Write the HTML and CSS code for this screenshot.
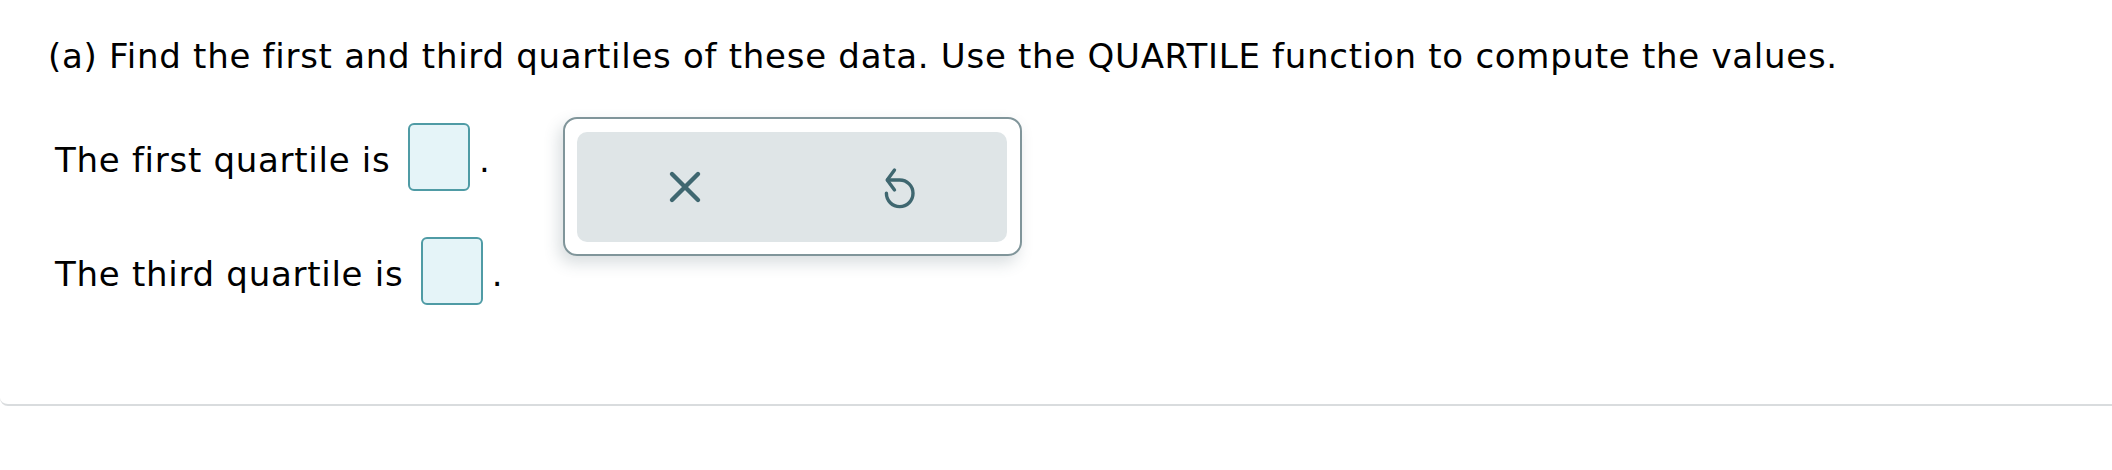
FILE: index.html
```html
<!DOCTYPE html>
<html>

<head>
    <meta charset="utf-8" />
    <title>Quartiles</title>
    <meta name="viewport" content="width=device-width, initial-scale=1">
    <link rel="stylesheet" href="styles.css">
</head>

<body>
    <div class="question">
        <p class="prompt">(a) Find the first and third quartiles of these data. Use the QUARTILE function to compute the values.</p>
        <div class="answers">
            <div class="answer-row">
                The first quartile is <span class="ans-box"></span>.
            </div>
            <div class="answer-row">
                The third quartile is <span class="ans-box"></span>.
            </div>

            <!-- keypad popup for the focused answer -->
            <div class="keypad">
                <div class="keypad-inner">
                    <button class="key" title="Clear">
                        <svg width="34" height="34" viewBox="0 0 34 34">
                            <path d="M4 4 L30 30 M30 4 L4 30" />
                        </svg>
                    </button>
                    <button class="key" title="Undo">
                        <svg width="40" height="44" viewBox="0 0 40 44">
                            <path d="M14.5 5 L7.2 15 L14.5 25" />
                            <path d="M7.6 15 H19.7 A13.3 13.3 0 1 1 6.4 28.3" />
                        </svg>
                    </button>
                </div>
            </div>
        </div>
    </div>
</body>

</html>
```

FILE: styles.css
```css
/* base */

body {
    margin: 0;
    font-family: "DejaVu Sans", Verdana, sans-serif;
    font-size: 34px;
    letter-spacing: 0.72px;
    color: #000;
    background: #fff;
}

/* layout */

.question {
    height: 406px;
    box-sizing: border-box;
    border-bottom: 2px solid #d9dcde;
    border-bottom-left-radius: 8px;
}

.prompt {
    margin: 0;
    padding: 36px 0 0 48px;
    line-height: 40px;
}

.answers {
    position: relative;
    margin-top: 47px;
}

.answer-row {
    padding-left: 55px;
    line-height: 40px;
    margin-bottom: 46px;
}

/* answer inputs */

.ans-box {
    display: inline-block;
    width: 62px;
    height: 68px;
    box-sizing: border-box;
    margin: 0 9px 0 6px;
    vertical-align: -19px;
    border: 2.5px solid #4f9ba5;
    border-radius: 6px;
    background-color: #e5f4f8;
}

/* keypad popup */

.keypad {
    position: absolute;
    left: 563px;
    top: -6px;
    width: 459px;
    height: 139px;
    box-sizing: border-box;
    padding: 13px 13px 12px 12px;
    border: 2px solid #80959a;
    border-radius: 14px;
    background: #fff;
    box-shadow: -4px 7px 16px rgba(60, 85, 95, 0.2);
}

.keypad-inner {
    display: flex;
    height: 100%;
    border-radius: 10px;
    background-color: #dfe5e7;
}

.key {
    flex: 1;
    display: flex;
    align-items: center;
    justify-content: center;
    padding: 0;
    border: none;
    background: none;
}

.key svg path {
    fill: none;
    stroke: #3f6770;
    stroke-linecap: round;
    stroke-linejoin: round;
    stroke-width: 3.4;
}

.key:first-child svg path {
    stroke-width: 4.4;
}
```
